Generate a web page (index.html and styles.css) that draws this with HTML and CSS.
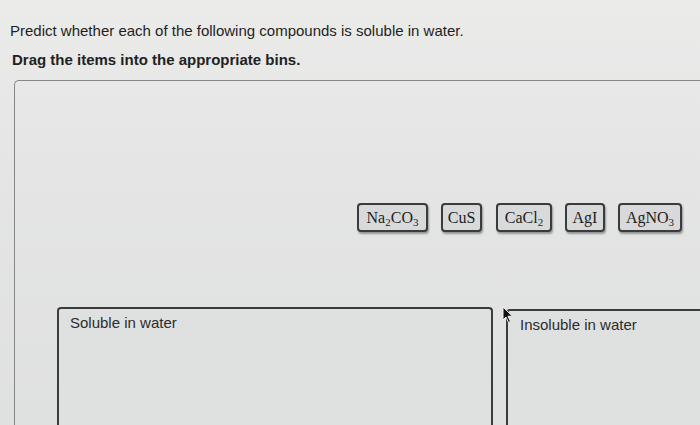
FILE: index.html
```html
<!DOCTYPE html>
<html lang="en">
<head>
<meta charset="utf-8">
<title>Solubility sorting</title>
<link rel="stylesheet" href="styles.css">
</head>
<body>
<main class="page">
  <p class="prompt">Predict whether each of the following compounds is soluble in water.</p>
  <p class="instruction">Drag the items into the appropriate bins.</p>

  <section class="board">
    <div class="pool">
      <span class="chip"><span>Na<sub>2</sub>CO<sub>3</sub></span></span>
      <span class="chip"><span>CuS</span></span>
      <span class="chip"><span>CaCl<sub>2</sub></span></span>
      <span class="chip"><span>AgI</span></span>
      <span class="chip"><span>AgNO<sub>3</sub></span></span>
    </div>

    <div class="bins">
      <div class="bin">
        <span class="bin-label">Soluble in water</span>
      </div>
      <div class="bin bin-right">
        <span class="bin-label">Insoluble in water</span>
        <svg class="pointer" width="12" height="18" viewBox="0 0 12 18" aria-hidden="true">
          <path d="M1 1 L1 14 L4 11 L6.5 16.5 L8.5 15.6 L6 10.2 L10.5 10.2 Z" fill="#111" stroke="#f2f2f2" stroke-width="1"/>
        </svg>
      </div>
    </div>
  </section>
</main>
</body>
</html>
```

FILE: styles.css
```css
html, body {
  margin: 0;
  padding: 0;
}

body {
  width: 700px;
  height: 425px;
  overflow: hidden;
  background: linear-gradient(180deg, #ebebea 0%, #e4e5e4 40%, #dfe0e0 100%);
  font-family: "Liberation Sans", Arial, Helvetica, sans-serif;
  color: #222;
}

.page {
  height: 425px;
  box-sizing: border-box;
  padding-top: 22px;
  display: flex;
  flex-direction: column;
}

.prompt {
  margin: 0 0 11px 10px;
  font-size: 15px;
  line-height: 18px;
  color: #1f1f1f;
}

.instruction {
  margin: 0 0 11px 12px;
  font-size: 15px;
  line-height: 18px;
  font-weight: bold;
  color: #222;
}

/* the drag area runs on past the right and bottom of the view */
.board {
  flex: 1;
  margin-left: 14px;
  border: 1.5px solid #858786;
  border-right: 0;
  border-bottom: 0;
  border-radius: 5px 0 0 0;
  padding-top: 122px;
  display: flex;
  flex-direction: column;
  min-height: 0;
}

.pool {
  display: flex;
  gap: 10px;
  padding-left: 342px;
}

.chip {
  display: inline-flex;
  align-items: center;
  justify-content: center;
  height: 29px;
  box-sizing: border-box;
  border: 2px solid #3a3b3c;
  border-radius: 4px;
  background: #d7d9da;
  box-shadow: 1px 2px 2px rgba(0, 0, 0, 0.35);
  font-family: "Liberation Serif", "Times New Roman", serif;
  font-size: 16px;
  color: #1e1e1e;
  white-space: nowrap;
}

.chip > span {
  line-height: 1;
}

.chip sub {
  font-size: 11px;
  vertical-align: -3px;
  line-height: 0;
}

.chip:nth-child(1) { width: 71px; }
.chip:nth-child(2) { width: 41px; margin-left: 3px; }
.chip:nth-child(3) { width: 56px; margin-left: 4px; }
.chip:nth-child(4) { width: 40px; margin-left: 3px; }
.chip:nth-child(5) { width: 64px; margin-left: 3px; }

.bins {
  flex: 1;
  display: flex;
  gap: 13px;
  margin-top: 75px;
  padding-left: 42px;
  min-height: 0;
}

.bin {
  position: relative;
  width: 436px;
  box-sizing: border-box;
  border: 2px solid #3b3c3d;
  border-bottom: 0;
  border-radius: 4px 4px 0 0;
  background: #dfe1e1;
  padding: 5px 0 0 11px;
}

.bin-right {
  flex: 1;
  width: auto;
  margin-top: 2px;
  border-right: 0;
  border-radius: 4px 0 0 0;
  padding-left: 12px;
}

.bin-label {
  font-size: 15px;
  line-height: 18px;
  color: #2c2c2c;
}

.pointer {
  position: absolute;
  left: -6px;
  top: -5px;
}
```
